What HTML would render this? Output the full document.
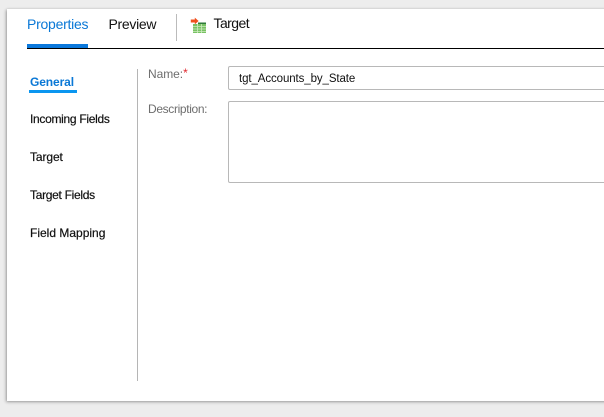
<!DOCTYPE html>
<html>
<head>
<meta charset="utf-8">
<style>
html,body{margin:0;padding:0;width:604px;height:417px;overflow:hidden;background:#ededed;font-family:"Liberation Sans",sans-serif;}
#panel{position:absolute;left:7px;top:9px;width:640px;height:392px;background:#fff;box-shadow:-1px 1px 3px rgba(0,0,0,.32),0 0 2px rgba(0,0,0,.12);}
.t{position:absolute;white-space:nowrap;line-height:16px;}
.b{position:absolute;}
.n{font-size:12px;color:#111;-webkit-text-stroke:.2px #111;}
</style>
</head>
<body>
<div id="panel"></div>
<div class="t" style="left:27px;top:16px;font-size:14px;color:#0a78d6;letter-spacing:-.25px;">Properties</div>
<div class="t" style="left:108.5px;top:16px;font-size:14px;color:#111;letter-spacing:-.3px;">Preview</div>
<div class="b" style="left:176px;top:14px;width:1px;height:27px;background:#bbb;"></div>
<svg class="b" style="left:190px;top:17px;" width="17" height="17" viewBox="0 0 17 17">
<rect x="3" y="7" width="13" height="9" fill="#78c264"/>
<path d="M3 9.5H16M3 12H16M3 14.5H16M7.5 7V16M11.5 7V16" stroke="#cdeabf" stroke-width=".8"/>
<rect x="8" y="5.5" width="8" height="1.5" fill="#2f7a3a"/>
<path d="M.8 2.5H4.8V.6L8.6 4L4.8 7.4V5.5H.8Z" fill="#f0501e"/>
</svg>
<div class="t" style="left:213.5px;top:15px;font-size:14px;color:#111;letter-spacing:-.55px;">Target</div>
<div class="b" style="left:27px;top:44px;width:61px;height:4px;background:#0a78dc;"></div>
<div class="b" style="left:27px;top:48px;width:577px;height:1px;background:#000;"></div>

<div class="t" style="left:30px;top:74px;font-size:12px;font-weight:bold;color:#0a78d6;letter-spacing:-.1px;">General</div>
<div class="b" style="left:29px;top:90px;width:48px;height:3px;background:#0a96f0;"></div>
<div class="t n" style="left:30px;top:111px;letter-spacing:-.3px;">Incoming Fields</div>
<div class="t n" style="left:30px;top:149px;letter-spacing:-.1px;">Target</div>
<div class="t n" style="left:30px;top:187px;letter-spacing:-.3px;">Target Fields</div>
<div class="t n" style="left:30px;top:225px;letter-spacing:0;">Field Mapping</div>

<div class="b" style="left:137px;top:69px;width:1px;height:312px;background:#b5b5b5;"></div>

<div class="t" style="left:148px;top:66px;font-size:12px;color:#6e6e6e;letter-spacing:-.05px;">Name:<span style="color:#e0282e;position:relative;top:-1px;">*</span></div>
<div class="t" style="left:148px;top:101px;font-size:12px;color:#6e6e6e;letter-spacing:-.35px;">Description:</div>

<div class="b" style="left:228px;top:66px;width:400px;height:22px;border:1px solid #b8b8b8;border-radius:2px;background:#fff;"></div>
<div class="t" style="left:239px;top:71px;font-size:11.5px;color:#111;letter-spacing:-.1px;">tgt_Accounts_by_State</div>
<div class="b" style="left:228px;top:101px;width:400px;height:80px;border:1px solid #b8b8b8;border-radius:2px;background:#fff;"></div>
</body>
</html>
